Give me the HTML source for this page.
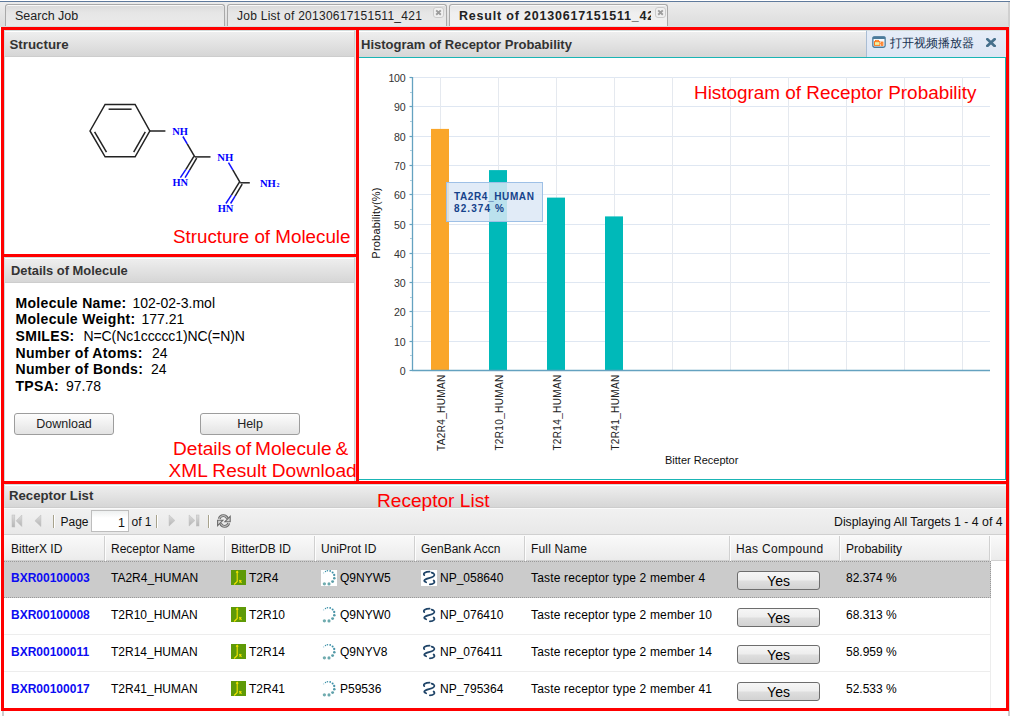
<!DOCTYPE html>
<html><head><meta charset="utf-8">
<style>
*{margin:0;padding:0;box-sizing:border-box}
html,body{width:1012px;height:717px;overflow:hidden;background:#fff;font-family:"Liberation Sans",sans-serif;color:#000}
.a{position:absolute}
.red{position:absolute;background:#ff0000}
.hdr{position:absolute;background:linear-gradient(#efefef,#d6d6d6);border-top:1px solid #d3dcdc;border-left:1px solid #d3dcdc;box-shadow:inset 0 1px #fff;border-bottom:1px solid #cdcdcd;font-weight:bold;font-size:13px;color:#333;white-space:nowrap}
.tab{position:absolute;top:4px;height:23px;border:1px solid #a9a9a9;border-bottom:none;border-radius:3px 3px 0 0;background:linear-gradient(#d9d9d9,#e6e6e6 35%,#ebebeb);box-shadow:inset 0 1px #f8f8f8;font-size:12.5px;color:#222;white-space:nowrap;overflow:hidden}
.btn{position:absolute;border:1px solid #9d9d9d;border-radius:3px;background:linear-gradient(#fdfdfd,#e3e3e3);font-size:12.5px;color:#222;text-align:center;line-height:20px}
.ann{position:absolute;color:#ff0000;font-size:19.1px;line-height:18px;white-space:nowrap}
.ybtn{position:absolute;width:83px;height:19px;border:1px solid #6d6d6d;border-radius:3px;background:linear-gradient(#f6f6f6 0%,#eeeeee 45%,#dedede 55%,#d2d2d2 100%);font-size:14px;line-height:19px;text-align:center;color:#000}
.tx{position:absolute;white-space:nowrap}
</style></head><body>
<!-- top bar -->
<div class="a" style="left:0;top:1px;width:1010px;height:1px;background:#5f7a9c"></div>
<div class="a" style="left:0;top:2px;width:1009px;height:25px;background:linear-gradient(#ececec,#dcdcdc)"></div>
<div class="a" style="left:1008px;top:2px;width:2px;height:25px;background:#d0d0d0"></div><div class="a" style="left:1009px;top:27px;width:1px;height:684px;background:#d3dede"></div><div class="a" style="left:1008px;top:711px;width:2px;height:5px;background:#cccccc"></div><div class="a" style="left:2px;top:711px;width:2px;height:5px;background:#cccccc"></div>
<div class="tab" style="left:5px;width:220px"><span class="tx" style="left:9px;top:4px">Search Job</span></div>
<div class="tab" style="left:227px;width:220px"><span class="tx" style="left:9px;top:4px;font-size:12px;letter-spacing:0.26px">Job List of 20130617151511_421</span></div>
<div class="tab" style="left:449px;width:219px;background:linear-gradient(#e4e4e4,#efefef 35%,#f2f2f2)"><span class="tx" style="left:9px;top:4px;font-weight:bold;font-size:12.5px;letter-spacing:0.8px;width:192px;overflow:hidden">Result of 20130617151511_421</span></div>

<svg class="a" style="left:433px;top:7px" width="11" height="11" viewBox="0 0 11 11"><rect x="0.5" y="0.5" width="10" height="10" rx="2.5" fill="#f0f0f0" stroke="#cbcbcb" stroke-width="1"/><path d="M3.2 3.4 L7.8 7.8 M7.8 3.4 L3.2 7.8" stroke="#9c9c9c" stroke-width="1.9"/></svg>
<svg class="a" style="left:655px;top:7px" width="11" height="11" viewBox="0 0 11 11"><rect x="0.5" y="0.5" width="10" height="10" rx="2.5" fill="#f0f0f0" stroke="#cbcbcb" stroke-width="1"/><path d="M3.2 3.4 L7.8 7.8 M7.8 3.4 L3.2 7.8" stroke="#9c9c9c" stroke-width="1.9"/></svg>
<div class="a" style="left:0;top:26px;width:1009px;height:1px;background:#d6e0e0"></div>
<!-- Structure panel -->
<div class="a" style="left:4px;top:30px;width:352px;height:224px;border-right:1px solid #e3e9e9;border-left:1px solid #d0d8d8;background:#fff"></div><div class="a" style="left:354px;top:30px;width:1px;height:224px;background:#d0d0d0"></div>
<div class="hdr" style="left:4px;top:30px;width:350px;height:27px;z-index:1;font-size:13.3px"><span class="tx" style="left:4.5px;top:5.5px">Structure</span></div>


<!-- molecule -->
<svg class="a" style="left:0;top:0" width="360" height="250" viewBox="0 0 360 250">
<g stroke="#222" stroke-width="1.5" fill="none" stroke-linecap="butt">
<polygon points="90,131 105.1,104.5 135.1,104.5 149.8,131 135.1,156.8 105.1,156.8" stroke-linejoin="miter"/>
<line x1="108.6" y1="109.2" x2="131.6" y2="109.2"/>
<line x1="145.3" y1="131.8" x2="133.7" y2="152.2"/>
<line x1="94.6" y1="131.8" x2="106.5" y2="152.2"/>
<line x1="149.8" y1="131" x2="165.4" y2="131"/>
<line x1="187.2" y1="143.8" x2="194.8" y2="156.9"/>
<line x1="194.8" y1="156.9" x2="210.5" y2="156.9"/>
<line x1="193.9" y1="156.3" x2="185.9" y2="169.3"/>
<line x1="196.7" y1="158.2" x2="189.6" y2="170.2"/>
<line x1="232.8" y1="169.9" x2="240.3" y2="182.8"/>
<line x1="240.3" y1="182.8" x2="249.8" y2="182.8"/>
<line x1="239.4" y1="182.2" x2="231.4" y2="195.2"/>
<line x1="242.2" y1="184.1" x2="235.1" y2="196.1"/>
</g>
<g stroke="#1010ff" stroke-width="1.5" fill="none">
<line x1="182.9" y1="136.5" x2="187.2" y2="143.8"/>
<line x1="185.9" y1="169.3" x2="180.4" y2="177.6"/>
<line x1="189.6" y1="170.2" x2="185.1" y2="177.6"/>
<line x1="228.5" y1="162.6" x2="232.8" y2="169.9"/>
<line x1="231.4" y1="195.2" x2="225.9" y2="203.5"/>
<line x1="235.1" y1="196.1" x2="230.6" y2="203.5"/>
</g>
<g fill="#0000ff" font-family="Liberation Serif" font-weight="bold" font-size="10">
<text x="172.3" y="134.8" textLength="15.7" lengthAdjust="spacingAndGlyphs">NH</text>
<text x="217.3" y="160.8" textLength="16" lengthAdjust="spacingAndGlyphs">NH</text>
<text x="172.5" y="185.9" textLength="15.6" lengthAdjust="spacingAndGlyphs">HN</text>
<text x="217.7" y="212.2" textLength="15.7" lengthAdjust="spacingAndGlyphs">HN</text>
<text x="259.9" y="186.9" textLength="16" lengthAdjust="spacingAndGlyphs">NH</text>
<text x="276.5" y="186.9" font-size="6">2</text>
</g>
</svg>

<!-- Details panel -->
<div class="a" style="left:4px;top:257px;width:352px;height:224px;border-right:1px solid #e3e9e9;border-left:1px solid #d0d8d8;background:#fff"></div><div class="a" style="left:354px;top:257px;width:1px;height:224px;background:#d0d0d0"></div>
<div class="hdr" style="left:4px;top:257px;width:350px;height:26px;font-size:12.9px"><span class="tx" style="left:6px;top:5px">Details of Molecule</span></div>


<!-- details content -->
<div class="a" style="left:0;top:0;font-size:14px;line-height:14px">
<span class="tx" style="left:15.5px;top:295.5px;font-weight:bold;letter-spacing:0.32px">Molecule Name:</span><span class="tx" style="left:132.5px;top:295.5px">102-02-3.mol</span>
<span class="tx" style="left:15.5px;top:312.3px;font-weight:bold;letter-spacing:0.32px">Molecule Weight:</span><span class="tx" style="left:141.5px;top:312.3px">177.21</span>
<span class="tx" style="left:15.5px;top:329px;font-weight:bold;letter-spacing:0.32px">SMILES:</span><span class="tx" style="left:83.5px;top:329px;letter-spacing:-0.1px">N=C(Nc1ccccc1)NC(=N)N</span>
<span class="tx" style="left:15.5px;top:345.7px;font-weight:bold;letter-spacing:0.35px">Number of Atoms:</span><span class="tx" style="left:152px;top:345.7px">24</span>
<span class="tx" style="left:15.5px;top:362.3px;font-weight:bold;letter-spacing:0.35px">Number of Bonds:</span><span class="tx" style="left:151px;top:362.3px">24</span>
<span class="tx" style="left:15.5px;top:379px;font-weight:bold;letter-spacing:0.3px">TPSA:</span><span class="tx" style="left:66px;top:379px">97.78</span>
</div>
<div class="btn" style="left:14px;top:413px;width:100px;height:22px">Download</div>
<div class="btn" style="left:200px;top:413px;width:100px;height:22px">Help</div>
<!-- annotations -->
<div class="ann" style="left:173px;top:227.5px;font-size:18.8px">Structure of Molecule</div>
<div class="ann" style="left:173px;top:440px;word-spacing:-1.4px">Details of Molecule &amp;</div>
<div class="ann" style="left:168.5px;top:462px;font-size:19.1px">XML Result Download</div>

<!-- Histogram panel -->
<div class="a" style="left:359px;top:30px;width:647px;height:450px;border-right:1px solid #1ab5b5;border-bottom:1px solid #1ab5b5;background:#fff"></div>
<div class="hdr" style="left:359px;top:30px;width:647px;height:28px;border-bottom:1px solid #1ab5b5;border-left:none"><span class="tx" style="left:2px;top:6px">Histogram of Receptor Probability</span></div>


<!-- chart -->
<svg class="a" style="left:0;top:0" width="1012" height="480" viewBox="0 0 1012 480">
<g stroke="#dfe7f2" stroke-width="1"><line x1="413" y1="341.5" x2="990" y2="341.5"/><line x1="413" y1="311.5" x2="990" y2="311.5"/><line x1="413" y1="282.5" x2="990" y2="282.5"/><line x1="413" y1="253.5" x2="990" y2="253.5"/><line x1="413" y1="224.5" x2="990" y2="224.5"/><line x1="413" y1="194.5" x2="990" y2="194.5"/><line x1="413" y1="165.5" x2="990" y2="165.5"/><line x1="413" y1="136.5" x2="990" y2="136.5"/><line x1="413" y1="106.5" x2="990" y2="106.5"/><line x1="413" y1="77.5" x2="990" y2="77.5"/></g>
<g stroke="#e5e9ef" stroke-width="1"><line x1="440.5" y1="77" x2="440.5" y2="370"/><line x1="498.5" y1="77" x2="498.5" y2="370"/><line x1="556.5" y1="77" x2="556.5" y2="370"/><line x1="614.5" y1="77" x2="614.5" y2="370"/><line x1="672.5" y1="77" x2="672.5" y2="370"/><line x1="730.5" y1="77" x2="730.5" y2="370"/><line x1="788.5" y1="77" x2="788.5" y2="370"/><line x1="846.5" y1="77" x2="846.5" y2="370"/><line x1="904.5" y1="77" x2="904.5" y2="370"/><line x1="962.5" y1="77" x2="962.5" y2="370"/></g>
<rect x="431" y="128.9" width="18" height="241.6" fill="#faa629"/>
<rect x="489" y="170.1" width="18" height="200.4" fill="#00b9b9"/>
<rect x="547" y="197.6" width="18" height="172.9" fill="#00b9b9"/>
<rect x="605" y="216.4" width="18" height="154.1" fill="#00b9b9"/>
<g stroke="#64a2c0" stroke-width="1.3"><line x1="412.5" y1="77" x2="412.5" y2="371"/><line x1="412" y1="370.5" x2="990" y2="370.5"/></g>
<g stroke="#64a2c0" stroke-width="1.2"><line x1="409.5" y1="370.5" x2="412" y2="370.5"/><line x1="409.5" y1="341.5" x2="412" y2="341.5"/><line x1="409.5" y1="311.5" x2="412" y2="311.5"/><line x1="409.5" y1="282.5" x2="412" y2="282.5"/><line x1="409.5" y1="253.5" x2="412" y2="253.5"/><line x1="409.5" y1="224.5" x2="412" y2="224.5"/><line x1="409.5" y1="194.5" x2="412" y2="194.5"/><line x1="409.5" y1="165.5" x2="412" y2="165.5"/><line x1="409.5" y1="136.5" x2="412" y2="136.5"/><line x1="409.5" y1="106.5" x2="412" y2="106.5"/><line x1="409.5" y1="77.5" x2="412" y2="77.5"/></g>
<g stroke="#a8cadb" stroke-width="1.2"><line x1="410" y1="355.5" x2="412" y2="355.5"/><line x1="410" y1="326.5" x2="412" y2="326.5"/><line x1="410" y1="297.5" x2="412" y2="297.5"/><line x1="410" y1="267.5" x2="412" y2="267.5"/><line x1="410" y1="238.5" x2="412" y2="238.5"/><line x1="410" y1="209.5" x2="412" y2="209.5"/><line x1="410" y1="180.5" x2="412" y2="180.5"/><line x1="410" y1="150.5" x2="412" y2="150.5"/><line x1="410" y1="121.5" x2="412" y2="121.5"/><line x1="410" y1="92.5" x2="412" y2="92.5"/></g>
<g font-family="Liberation Sans" font-size="10.6" fill="#333" text-anchor="end" letter-spacing="-0.2"><text x="405.5" y="374.6">0</text><text x="405.5" y="345.6">10</text><text x="405.5" y="315.6">20</text><text x="405.5" y="286.6">30</text><text x="405.5" y="257.6">40</text><text x="405.5" y="228.6">50</text><text x="405.5" y="198.6">60</text><text x="405.5" y="169.6">70</text><text x="405.5" y="140.6">80</text><text x="405.5" y="110.6">90</text><text x="405.5" y="81.6">100</text></g>
<g font-family="Liberation Sans" font-size="10" fill="#222" letter-spacing="0.35"><text transform="translate(445,374.5) rotate(-90)" text-anchor="end">TA2R4_HUMAN</text><text transform="translate(503,374.5) rotate(-90)" text-anchor="end">T2R10_HUMAN</text><text transform="translate(561,374.5) rotate(-90)" text-anchor="end">T2R14_HUMAN</text><text transform="translate(619,374.5) rotate(-90)" text-anchor="end">T2R41_HUMAN</text></g>
<text x="665" y="464" font-family="Liberation Sans" font-size="11" fill="#111">Bitter Receptor</text>
<text transform="translate(380,223) rotate(-90)" text-anchor="middle" font-family="Liberation Sans" font-size="11" fill="#111" letter-spacing="0.2">Probability(%)</text>
<rect x="446.5" y="182.5" width="96" height="39" fill="#dce8f6" fill-opacity="0.85" stroke="#9ec0e6" stroke-width="1"/>
<g font-family="Liberation Sans" font-size="10" font-weight="bold" fill="#15428b"><text x="454" y="200.3" letter-spacing="0.62">TA2R4_HUMAN</text><text x="454" y="212.3" letter-spacing="1.1">82.374 %</text></g>
</svg>
<!-- video toolbar -->
<div class="a" style="left:866px;top:30px;width:140px;height:27px;border-top:1px solid #d3dcdc;border-left:1px solid #a9bdd4;background:linear-gradient(#e6edf8,#dde6f4)"></div>
<svg class="a" style="left:871px;top:36px" width="16" height="13" viewBox="0 0 16 13">
<rect x="1.85" y="0.85" width="12.3" height="10.4" rx="1.8" fill="#f4fbff" stroke="#4b7b9b" stroke-width="1.3"/>
<rect x="1.5" y="0.5" width="13" height="2.4" rx="1" fill="#4b7b9b"/>
<rect x="3.5" y="5.6" width="5.4" height="3.8" fill="#e9f3a8" stroke="#ff7a1e" stroke-width="1"/>
<rect x="4.5" y="4.4" width="3" height="1.2" fill="#fff" stroke="#ff7a1e" stroke-width="0.9"/>
<path d="M9 7.5 L10.2 6.6 V8.4 Z" fill="#ff7a1e"/>
<rect x="10.4" y="6" width="1.6" height="3.4" fill="#ffa060" stroke="#ff7a1e" stroke-width="0.8"/>
</svg>
<div class="tx" style="left:890px;top:34.5px;font-size:12px;color:#15304f;letter-spacing:0px">打开视频播放器</div>
<svg class="a" style="left:986px;top:38px" width="10" height="9" viewBox="0 0 10 9"><path d="M1.4 1.2 L8.6 7.9 M8.6 1.2 L1.4 7.9" stroke="#46708c" stroke-width="2.7" stroke-linecap="square"/></svg>

<!-- Receptor panel -->
<div class="a" style="left:4px;top:484px;width:1002px;height:224px;background:#fff"></div>
<div class="hdr" style="left:4px;top:484px;width:1002px;height:24px;font-size:13.2px"><span class="tx" style="left:4px;top:3px">Receptor List</span></div>

<!-- toolbar -->
<div class="a" style="left:4px;top:508px;width:1002px;height:27px;background:linear-gradient(#f1f1f1,#e8e8e8);border-top:1px solid #fafafa;border-bottom:1px solid #d0d0d0"></div>
<svg class="a" style="left:0;top:505px" width="240" height="30" viewBox="0 505 240 30">
<defs><linearGradient id="tg" x1="0" y1="0" x2="0" y2="1"><stop offset="0" stop-color="#dcdcdc"/><stop offset="1" stop-color="#b4b4b4"/></linearGradient></defs>
<g fill="url(#tg)" stroke="#bdbdbd" stroke-width="0.5">
<rect x="12" y="515" width="2.8" height="12"/>
<path d="M16.1 520.8 L21.8 515 L21.8 526.5 Z"/>
<path d="M34.9 520.8 L40.9 515 L40.9 526.5 Z"/>
<path d="M174.9 520.5 L169.1 515 L169.1 526 Z"/>
<path d="M194.9 520.5 L189.1 515 L189.1 526 Z"/>
<rect x="196.3" y="515" width="2.7" height="11"/>
</g>
<g fill="#a7a28c"><rect x="53" y="515" width="1" height="13"/><rect x="156" y="515" width="1" height="13"/><rect x="208" y="515" width="1" height="13"/></g>
<g fill="#fff"><rect x="54" y="515" width="1" height="13"/><rect x="157" y="515" width="1" height="13"/><rect x="209" y="515" width="1" height="13"/></g>
<g fill="none" stroke-linecap="butt">
<path d="M219.2 518.8 A4.3 4.3 0 0 1 227.4 518.4" stroke="#6a6a6a" stroke-width="2.8"/>
<path d="M219.2 518.8 A4.3 4.3 0 0 1 227.4 518.4" stroke="#d8d8d8" stroke-width="0.9"/>
<path d="M228.8 523.2 A4.3 4.3 0 0 1 220.6 523.6" stroke="#6a6a6a" stroke-width="2.8"/>
<path d="M228.8 523.2 A4.3 4.3 0 0 1 220.6 523.6" stroke="#d8d8d8" stroke-width="0.9"/>
</g>
<g fill="#d4d4d4" stroke="#6a6a6a" stroke-width="1.1" stroke-linejoin="miter">
<path d="M230.2 516.4 L230.2 521.7 L224.9 521.7 Z"/>
<path d="M217.6 525.6 L217.6 520.3 L222.9 520.3 Z"/>
</g>
</svg>
<div class="tx" style="left:60.5px;top:515px;font-size:12px;color:#111">Page</div>
<div class="a" style="left:91px;top:510px;width:38px;height:22px;border:1px solid #bdbdbd;background:linear-gradient(#eef0f0,#fff 35%);"></div>
<div class="tx" style="left:118px;top:516px;font-size:12.5px;color:#111">1</div>
<div class="tx" style="left:131.5px;top:515px;font-size:12px;color:#111">of 1</div>
<div class="tx" style="left:834px;top:515px;font-size:12.3px;color:#111">Displaying All Targets 1 - 4 of 4</div>
<!-- column header -->
<div class="a" style="left:4px;top:535px;width:1002px;height:26px;background:linear-gradient(#fafafa,#ebebeb);border-bottom:1px solid #d0d0d0"></div>
<div class="tx" style="left:11px;top:542px;font-size:12px;color:#111">BitterX ID</div>
<div class="a" style="left:104px;top:536px;width:1px;height:25px;background:#d0d0d0"></div><div class="a" style="left:105px;top:536px;width:1px;height:25px;background:#fdfdfd"></div>
<div class="tx" style="left:111px;top:542px;font-size:12px;color:#111">Receptor Name</div>
<div class="a" style="left:224px;top:536px;width:1px;height:25px;background:#d0d0d0"></div><div class="a" style="left:225px;top:536px;width:1px;height:25px;background:#fdfdfd"></div>
<div class="tx" style="left:231px;top:542px;font-size:12px;color:#111">BitterDB ID</div>
<div class="a" style="left:314px;top:536px;width:1px;height:25px;background:#d0d0d0"></div><div class="a" style="left:315px;top:536px;width:1px;height:25px;background:#fdfdfd"></div>
<div class="tx" style="left:321px;top:542px;font-size:12px;color:#111">UniProt ID</div>
<div class="a" style="left:414px;top:536px;width:1px;height:25px;background:#d0d0d0"></div><div class="a" style="left:415px;top:536px;width:1px;height:25px;background:#fdfdfd"></div>
<div class="tx" style="left:421px;top:542px;font-size:12px;color:#111">GenBank Accn</div>
<div class="a" style="left:524px;top:536px;width:1px;height:25px;background:#d0d0d0"></div><div class="a" style="left:525px;top:536px;width:1px;height:25px;background:#fdfdfd"></div>
<div class="tx" style="letter-spacing:0.16px;left:531px;top:542px;font-size:12px;color:#111">Full Name</div>
<div class="a" style="left:729px;top:536px;width:1px;height:25px;background:#d0d0d0"></div><div class="a" style="left:730px;top:536px;width:1px;height:25px;background:#fdfdfd"></div>
<div class="tx" style="left:736px;top:542px;font-size:12px;color:#111;letter-spacing:0.35px">Has Compound</div>
<div class="a" style="left:839px;top:536px;width:1px;height:25px;background:#d0d0d0"></div><div class="a" style="left:840px;top:536px;width:1px;height:25px;background:#fdfdfd"></div>
<div class="tx" style="left:846px;top:542px;font-size:12px;color:#111">Probability</div>
<div class="a" style="left:989px;top:536px;width:1px;height:25px;background:#d0d0d0"></div><div class="a" style="left:990px;top:536px;width:1px;height:25px;background:#fdfdfd"></div>
<!-- rows -->
<div class="a" style="left:4px;top:561px;width:987px;height:37px;background:#cbcbcb;border:1px dotted #999;border-left:none"></div>
<div class="tx" style="left:11px;top:571px;font-size:12px;font-weight:bold;color:#0c0cf2">BXR00100003</div>
<div class="tx" style="left:111px;top:571px;font-size:12px">TA2R4_HUMAN</div>
<svg class="a" style="left:231px;top:570px" width="15" height="15" viewBox="0 0 15 15"><rect width="15" height="15" fill="#5f9a07"/><g stroke="#f5e400" stroke-width="1.1" fill="none"><path d="M6.2 1.2 V11.5 L3.2 14.5"/><path d="M5.2 2.6 L6.2 1.3 L7.2 2.6"/><path d="M8.3 10.2 L10.5 12.8 M10.3 10.2 L8.4 12.5"/></g></svg>
<div class="tx" style="left:249px;top:571px;font-size:12px">T2R4</div>
<svg class="a" style="left:321px;top:570px" width="16" height="16" viewBox="0 0 16 16"><rect width="16" height="16" fill="#fff"/><g fill="#3c90a8"><circle cx="2.6" cy="2.9" r="0.7" fill="#a9d0dc"/><circle cx="4.5" cy="1.5" r="0.7"/><circle cx="6.4" cy="0.8" r="0.8"/><circle cx="9.2" cy="0.9" r="0.9"/><circle cx="11.6" cy="2.4" r="1.0"/><circle cx="13.2" cy="5" r="1.15" fill="#4a94aa"/><circle cx="13.3" cy="8.3" r="1.3" fill="#5399a8"/><circle cx="11.6" cy="11.6" r="1.45" fill="#5d9fa9"/><circle cx="8" cy="13.9" r="1.55" fill="#6aa8ad"/><circle cx="3.4" cy="13.8" r="1.65" fill="#72adb0"/></g></svg>
<div class="tx" style="left:340px;top:571px;font-size:12px">Q9NYW5</div>
<svg class="a" style="left:421px;top:570px" width="16" height="16" viewBox="0 0 16 16"><rect width="16" height="16" fill="#fff"/><g stroke="#1f4468" stroke-width="1.7" fill="none" stroke-linecap="round"><path d="M8.6 1.6 C4.5 1.6 1.5 3.3 3.3 5.2"/><path d="M10.6 2.6 C14.8 3.8 14.5 6.6 8 8.1 C2.2 9.5 2.2 11.3 5.2 12.3"/><path d="M12.6 10.5 C14.6 12.2 13 14.2 8.8 14.3"/></g></svg>
<div class="tx" style="left:440px;top:571px;font-size:12px">NP_058640</div>
<div class="tx" style="letter-spacing:0.16px;left:531px;top:571px;font-size:12px">Taste receptor type 2 member 4</div>
<div class="ybtn" style="left:737px;top:571px">Yes</div>
<div class="tx" style="left:846px;top:571px;font-size:12px">82.374 %</div>
<div class="a" style="left:4px;top:598px;width:987px;height:37px;background:#fff;border-bottom:1px solid #ededed;border-right:1px solid #ededed"></div>
<div class="tx" style="left:11px;top:608px;font-size:12px;font-weight:bold;color:#0c0cf2">BXR00100008</div>
<div class="tx" style="left:111px;top:608px;font-size:12px">T2R10_HUMAN</div>
<svg class="a" style="left:231px;top:607px" width="15" height="15" viewBox="0 0 15 15"><rect width="15" height="15" fill="#5f9a07"/><g stroke="#f5e400" stroke-width="1.1" fill="none"><path d="M6.2 1.2 V11.5 L3.2 14.5"/><path d="M5.2 2.6 L6.2 1.3 L7.2 2.6"/><path d="M8.3 10.2 L10.5 12.8 M10.3 10.2 L8.4 12.5"/></g></svg>
<div class="tx" style="left:249px;top:608px;font-size:12px">T2R10</div>
<svg class="a" style="left:321px;top:607px" width="16" height="16" viewBox="0 0 16 16"><rect width="16" height="16" fill="#fff"/><g fill="#3c90a8"><circle cx="2.6" cy="2.9" r="0.7" fill="#a9d0dc"/><circle cx="4.5" cy="1.5" r="0.7"/><circle cx="6.4" cy="0.8" r="0.8"/><circle cx="9.2" cy="0.9" r="0.9"/><circle cx="11.6" cy="2.4" r="1.0"/><circle cx="13.2" cy="5" r="1.15" fill="#4a94aa"/><circle cx="13.3" cy="8.3" r="1.3" fill="#5399a8"/><circle cx="11.6" cy="11.6" r="1.45" fill="#5d9fa9"/><circle cx="8" cy="13.9" r="1.55" fill="#6aa8ad"/><circle cx="3.4" cy="13.8" r="1.65" fill="#72adb0"/></g></svg>
<div class="tx" style="left:340px;top:608px;font-size:12px">Q9NYW0</div>
<svg class="a" style="left:421px;top:607px" width="16" height="16" viewBox="0 0 16 16"><rect width="16" height="16" fill="#fff"/><g stroke="#1f4468" stroke-width="1.7" fill="none" stroke-linecap="round"><path d="M8.6 1.6 C4.5 1.6 1.5 3.3 3.3 5.2"/><path d="M10.6 2.6 C14.8 3.8 14.5 6.6 8 8.1 C2.2 9.5 2.2 11.3 5.2 12.3"/><path d="M12.6 10.5 C14.6 12.2 13 14.2 8.8 14.3"/></g></svg>
<div class="tx" style="left:440px;top:608px;font-size:12px">NP_076410</div>
<div class="tx" style="letter-spacing:0.16px;left:531px;top:608px;font-size:12px">Taste receptor type 2 member 10</div>
<div class="ybtn" style="left:737px;top:608px">Yes</div>
<div class="tx" style="left:846px;top:608px;font-size:12px">68.313 %</div>
<div class="a" style="left:4px;top:635px;width:987px;height:37px;background:#fff;border-bottom:1px solid #ededed;border-right:1px solid #ededed"></div>
<div class="tx" style="left:11px;top:645px;font-size:12px;font-weight:bold;color:#0c0cf2">BXR00100011</div>
<div class="tx" style="left:111px;top:645px;font-size:12px">T2R14_HUMAN</div>
<svg class="a" style="left:231px;top:644px" width="15" height="15" viewBox="0 0 15 15"><rect width="15" height="15" fill="#5f9a07"/><g stroke="#f5e400" stroke-width="1.1" fill="none"><path d="M6.2 1.2 V11.5 L3.2 14.5"/><path d="M5.2 2.6 L6.2 1.3 L7.2 2.6"/><path d="M8.3 10.2 L10.5 12.8 M10.3 10.2 L8.4 12.5"/></g></svg>
<div class="tx" style="left:249px;top:645px;font-size:12px">T2R14</div>
<svg class="a" style="left:321px;top:644px" width="16" height="16" viewBox="0 0 16 16"><rect width="16" height="16" fill="#fff"/><g fill="#3c90a8"><circle cx="2.6" cy="2.9" r="0.7" fill="#a9d0dc"/><circle cx="4.5" cy="1.5" r="0.7"/><circle cx="6.4" cy="0.8" r="0.8"/><circle cx="9.2" cy="0.9" r="0.9"/><circle cx="11.6" cy="2.4" r="1.0"/><circle cx="13.2" cy="5" r="1.15" fill="#4a94aa"/><circle cx="13.3" cy="8.3" r="1.3" fill="#5399a8"/><circle cx="11.6" cy="11.6" r="1.45" fill="#5d9fa9"/><circle cx="8" cy="13.9" r="1.55" fill="#6aa8ad"/><circle cx="3.4" cy="13.8" r="1.65" fill="#72adb0"/></g></svg>
<div class="tx" style="left:340px;top:645px;font-size:12px">Q9NYV8</div>
<svg class="a" style="left:421px;top:644px" width="16" height="16" viewBox="0 0 16 16"><rect width="16" height="16" fill="#fff"/><g stroke="#1f4468" stroke-width="1.7" fill="none" stroke-linecap="round"><path d="M8.6 1.6 C4.5 1.6 1.5 3.3 3.3 5.2"/><path d="M10.6 2.6 C14.8 3.8 14.5 6.6 8 8.1 C2.2 9.5 2.2 11.3 5.2 12.3"/><path d="M12.6 10.5 C14.6 12.2 13 14.2 8.8 14.3"/></g></svg>
<div class="tx" style="left:440px;top:645px;font-size:12px">NP_076411</div>
<div class="tx" style="letter-spacing:0.16px;left:531px;top:645px;font-size:12px">Taste receptor type 2 member 14</div>
<div class="ybtn" style="left:737px;top:645px">Yes</div>
<div class="tx" style="left:846px;top:645px;font-size:12px">58.959 %</div>
<div class="a" style="left:4px;top:672px;width:987px;height:37px;background:#fff;border-bottom:1px solid #ededed;border-right:1px solid #ededed"></div>
<div class="tx" style="left:11px;top:682px;font-size:12px;font-weight:bold;color:#0c0cf2">BXR00100017</div>
<div class="tx" style="left:111px;top:682px;font-size:12px">T2R41_HUMAN</div>
<svg class="a" style="left:231px;top:681px" width="15" height="15" viewBox="0 0 15 15"><rect width="15" height="15" fill="#5f9a07"/><g stroke="#f5e400" stroke-width="1.1" fill="none"><path d="M6.2 1.2 V11.5 L3.2 14.5"/><path d="M5.2 2.6 L6.2 1.3 L7.2 2.6"/><path d="M8.3 10.2 L10.5 12.8 M10.3 10.2 L8.4 12.5"/></g></svg>
<div class="tx" style="left:249px;top:682px;font-size:12px">T2R41</div>
<svg class="a" style="left:321px;top:681px" width="16" height="16" viewBox="0 0 16 16"><rect width="16" height="16" fill="#fff"/><g fill="#3c90a8"><circle cx="2.6" cy="2.9" r="0.7" fill="#a9d0dc"/><circle cx="4.5" cy="1.5" r="0.7"/><circle cx="6.4" cy="0.8" r="0.8"/><circle cx="9.2" cy="0.9" r="0.9"/><circle cx="11.6" cy="2.4" r="1.0"/><circle cx="13.2" cy="5" r="1.15" fill="#4a94aa"/><circle cx="13.3" cy="8.3" r="1.3" fill="#5399a8"/><circle cx="11.6" cy="11.6" r="1.45" fill="#5d9fa9"/><circle cx="8" cy="13.9" r="1.55" fill="#6aa8ad"/><circle cx="3.4" cy="13.8" r="1.65" fill="#72adb0"/></g></svg>
<div class="tx" style="left:340px;top:682px;font-size:12px">P59536</div>
<svg class="a" style="left:421px;top:681px" width="16" height="16" viewBox="0 0 16 16"><rect width="16" height="16" fill="#fff"/><g stroke="#1f4468" stroke-width="1.7" fill="none" stroke-linecap="round"><path d="M8.6 1.6 C4.5 1.6 1.5 3.3 3.3 5.2"/><path d="M10.6 2.6 C14.8 3.8 14.5 6.6 8 8.1 C2.2 9.5 2.2 11.3 5.2 12.3"/><path d="M12.6 10.5 C14.6 12.2 13 14.2 8.8 14.3"/></g></svg>
<div class="tx" style="left:440px;top:682px;font-size:12px">NP_795364</div>
<div class="tx" style="letter-spacing:0.16px;left:531px;top:682px;font-size:12px">Taste receptor type 2 member 41</div>
<div class="ybtn" style="left:737px;top:682px">Yes</div>
<div class="tx" style="left:846px;top:682px;font-size:12px">52.533 %</div>
<div class="ann" style="left:377px;top:492.2px">Receptor List</div>
<div class="ann" style="left:694px;top:83.5px;font-size:18.9px">Histogram of Receptor Probability</div>
<!-- red boxes -->
<div class="red" style="left:1px;top:27px;width:1008px;height:3px"></div>
<div class="red" style="left:1px;top:27px;width:3px;height:684px"></div>
<div class="red" style="left:1006px;top:27px;width:3px;height:684px"></div>
<div class="red" style="left:356px;top:27px;width:3px;height:457px"></div>
<div class="red" style="left:1px;top:254px;width:358px;height:3px"></div>
<div class="red" style="left:1px;top:481px;width:1008px;height:3px"></div>
<div class="red" style="left:1px;top:708px;width:1008px;height:3px"></div>
</body></html>
